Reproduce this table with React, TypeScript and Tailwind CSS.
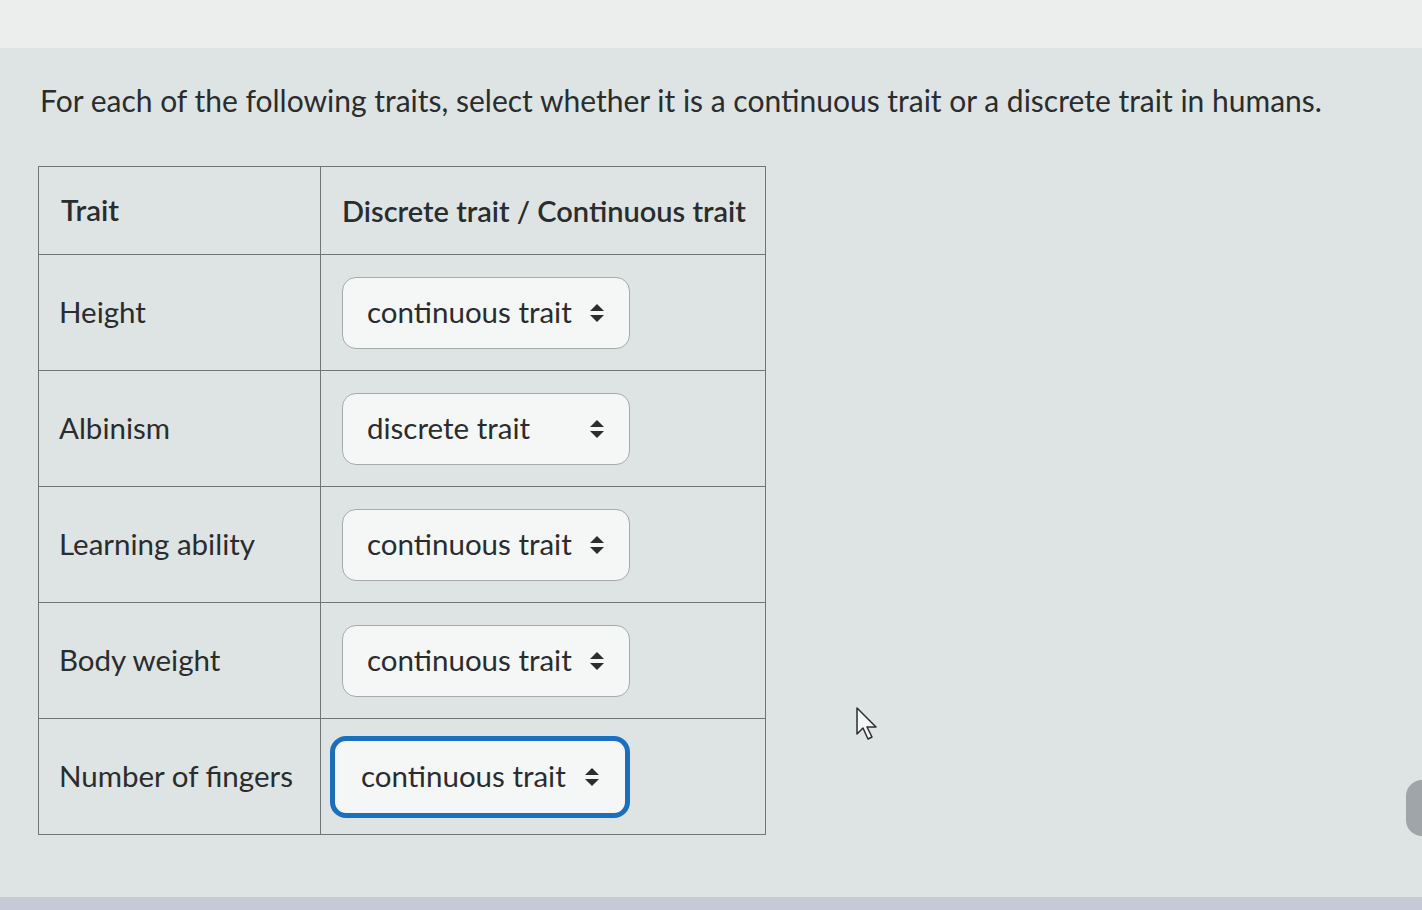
import React from "react";

const rows = [
  { trait: "Height", value: "continuous trait", focus: false },
  { trait: "Albinism", value: "discrete trait", focus: false },
  { trait: "Learning ability", value: "continuous trait", focus: false },
  { trait: "Body weight", value: "continuous trait", focus: false },
  { trait: "Number of fingers", value: "continuous trait", focus: true },
];

function Arrows() {
  return (
    <svg width="16" height="22" viewBox="0 0 16 22" className="shrink-0">
      <path d="M8 2 L15 9 H1 Z" fill="#2b2d2f" />
      <path d="M1 13 H15 L8 20 Z" fill="#2b2d2f" />
    </svg>
  );
}

export default function App() {
  return (
    <div
      className="relative w-[1422px] h-[910px] overflow-hidden bg-[#e8ebea] text-[#2a2c2e]"
      style={{ fontFamily: "Lato, 'Open Sans', sans-serif" }}
    >
      <div className="h-[48px] bg-[#eceeed]" />
      <div className="h-[849px] bg-[#dde4e3] pl-[40px] pt-[32px]">
        <p className="text-[30px] leading-[40px]">
          For each of the following traits, select whether it is a continuous trait or a discrete trait in humans.
        </p>
        <table className="mt-[46px] ml-[-2px] border-collapse text-[29.5px]">
          <tbody>
            <tr className="h-[88px]">
              <td className="w-[282px] border border-[#6d7775] pl-[22px] font-semibold align-middle">Trait</td>
              <td className="w-[445px] border border-[#6d7775] pl-[21px] font-semibold align-middle text-[29px]">
                Discrete trait / Continuous trait
              </td>
            </tr>
            {rows.map((r) => (
              <tr key={r.trait} className="h-[116px]">
                <td className="border border-[#6d7775] pl-[20px] align-middle">{r.trait}</td>
                <td className="border border-[#6d7775] pl-[21px] align-middle">
                  {r.focus ? (
                    <div className="ml-[-12px] flex h-[82px] w-[300px] items-center justify-between rounded-[16px] border-[5px] border-[#1b6fbf] bg-[#f5f7f6] pl-[26px] pr-[25px]">
                      <span>{r.value}</span>
                      <Arrows />
                    </div>
                  ) : (
                    <div className="flex h-[72px] w-[288px] items-center justify-between rounded-[14px] border border-[#a3abab] bg-[#f5f7f6] pl-[24px] pr-[24px]">
                      <span>{r.value}</span>
                      <Arrows />
                    </div>
                  )}
                </td>
              </tr>
            ))}
          </tbody>
        </table>
      </div>
      <div className="h-[13px] bg-[#c4cbd6]" />
      <div className="absolute right-[-16px] top-[780px] h-[56px] w-[32px] rounded-full bg-[#9fa5a8]" />
      <svg className="absolute left-[856px] top-[707px]" width="26" height="38" viewBox="0 0 26 38">
        <path d="M1 1 L1 27 L7 21 L12 32 L16 30 L11 20 L20 20 Z" fill="#f4f6f5" stroke="#2b2d2f" strokeWidth="1.5" strokeLinejoin="round" />
      </svg>
    </div>
  );
}
